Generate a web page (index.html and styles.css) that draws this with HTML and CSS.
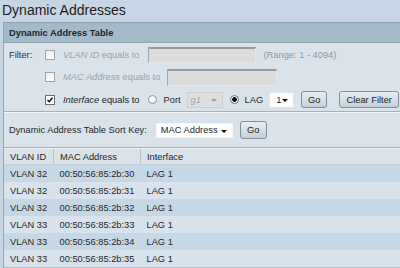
FILE: index.html
```html
<!DOCTYPE html>
<html lang="en">
<head>
<meta charset="utf-8">
<title>Dynamic Addresses</title>
<link rel="stylesheet" href="styles.css">
</head>
<body>
<h1 class="title">Dynamic Addresses</h1>
<div class="panel">
  <div class="panel-head">Dynamic Address Table</div>
  <div class="filter">
    <div class="frow r1">
      <span class="flabel">Filter:</span>
      <span class="cb"></span>
      <span class="lbl dis"><i>VLAN ID</i> equals to</span>
      <span class="tinput vlan"></span>
      <span class="hint">(Range: 1 - 4094)</span>
    </div>
    <div class="frow r2">
      <span class="cb"></span>
      <span class="lbl dis"><i>MAC Address</i> equals to</span>
      <span class="tinput mac"></span>
    </div>
    <div class="frow r3">
      <span class="cb checked"><svg viewBox="0 0 8 8" width="8" height="8"><path d="M1.5 4 L3.2 5.8 L6.5 1.8" fill="none" stroke="#111" stroke-width="1.4"/></svg></span>
      <span class="lbl"><i>Interface</i> equals to</span>
      <span class="radio rport"></span>
      <span class="txt port">Port</span>
      <span class="sel dsel port-sel"><span class="sv">g1</span><span class="arr"></span></span>
      <span class="radio on rlag"></span>
      <span class="txt lag">LAG</span>
      <span class="sel lag-sel"><span class="sv">1</span><span class="arr"></span></span>
      <span class="btn go1">Go</span>
      <span class="btn clear">Clear Filter</span>
    </div>
  </div>
  <div class="sortrow">
    <span class="txt">Dynamic Address Table Sort Key:</span>
    <span class="sel sort-sel"><span class="sv">MAC Address</span><span class="arr"></span></span>
    <span class="btn go2">Go</span>
  </div>
  <table class="grid">
    <thead>
      <tr><th class="c1">VLAN ID</th><th class="c2">MAC Address</th><th class="c3">Interface</th></tr>
    </thead>
    <tbody>
      <tr><td>VLAN 32</td><td>00:50:56:85:2b:30</td><td>LAG 1</td></tr>
      <tr><td>VLAN 32</td><td>00:50:56:85:2b:31</td><td>LAG 1</td></tr>
      <tr><td>VLAN 32</td><td>00:50:56:85:2b:32</td><td>LAG 1</td></tr>
      <tr><td>VLAN 33</td><td>00:50:56:85:2b:33</td><td>LAG 1</td></tr>
      <tr><td>VLAN 33</td><td>00:50:56:85:2b:34</td><td>LAG 1</td></tr>
      <tr><td>VLAN 33</td><td>00:50:56:85:2b:35</td><td>LAG 1</td></tr>
    </tbody>
  </table>
</div>
</body>
</html>
```

FILE: styles.css
```css
html, body {
  margin: 0;
  padding: 0;
}
body {
  background: #c6d6e4;
  font-family: "Liberation Sans", Arial, sans-serif;
  font-size: 9.3px;
  color: #2a2a2a;
  width: 400px;
  height: 268px;
  overflow: hidden;
}
.title {
  margin: 0;
  height: 22px;
  line-height: 21px;
  padding-left: 2px;
  font-size: 14px;
  font-weight: normal;
  color: #1c1c1c;
}
.panel {
  margin-left: 3px;
  border-left: 1px solid #93a6b4;
  border-top: 1px solid #8ea4b4;
  background: #dae2ea;
}
.panel-head {
  height: 19px;
  line-height: 20px;
  background: #a4bac9;
  border-bottom: 1px solid #90a6b5;
  padding-left: 5px;
  font-weight: bold;
  font-size: 9.3px;
  color: #1b2731;
}
.filter {
  padding-top: 1px;
  border-bottom: 1px solid #a3b0ba;
  box-shadow: 0 1px 0 #f2f5f8;
}
.frow {
  display: flex;
  align-items: center;
  height: 22px;
  padding-left: 41px;
}
.frow.r1 {
  padding-left: 5px;
}
.frow.r3 {
  height: 23px;
}
.flabel {
  width: 36px;
  color: #333;
}
.cb {
  box-sizing: border-box;
  width: 10px;
  height: 10px;
  border: 1px solid #a4a4a4;
  background: linear-gradient(#f0f0f0, #ffffff);
  display: flex;
  align-items: center;
  justify-content: center;
  flex: none;
}
.cb.checked {
  border-color: #6f6f6f;
  background: #fff;
}
.lbl {
  margin-left: 8px;
  white-space: nowrap;
  color: #262626;
}
.lbl.dis {
  color: #9aa3ab;
}
.tinput {
  box-sizing: border-box;
  background: #dcdcdc;
  border-top: 2px solid #9a9a9a;
  border-left: 1px solid #a8a8a8;
  border-right: 1px solid #e6e6e6;
  border-bottom: 1px solid #e6e6e6;
  margin-left: 8px;
  flex: none;
}
.tinput.vlan {
  width: 108px;
  height: 16px;
}
.tinput.mac {
  width: 110px;
  height: 17px;
  margin-left: 7px;
}
.hint {
  margin-left: 8px;
  color: #8d99a3;
  white-space: nowrap;
}
.radio {
  box-sizing: border-box;
  width: 9px;
  height: 9px;
  border-radius: 50%;
  border: 1px solid #9a9a9a;
  background: radial-gradient(circle at 50% 40%, #ffffff 30%, #dedede 100%);
  margin-left: 8px;
  flex: none;
}
.radio.on {
  border-color: #7a7a7a;
  background: radial-gradient(circle, #000 0 2px, #f4f4f4 2.6px, #d8d8d8 100%);
  margin-left: 7px;
}
.txt {
  white-space: nowrap;
  color: #262626;
}
.txt.port {
  margin-left: 7px;
}
.txt.lag {
  margin-left: 6px;
}
.sel {
  box-sizing: border-box;
  display: flex;
  align-items: center;
  height: 16px;
  background: #fff;
  border: 1px solid #e2e6ea;
  padding-left: 3px;
  position: relative;
  flex: none;
  color: #1e1e1e;
}
.sel .arr {
  position: absolute;
  right: 5px;
  top: 6px;
  width: 0;
  height: 0;
  border-left: 3px solid transparent;
  border-right: 3px solid transparent;
  border-top: 3px solid #111;
}
.sel.dsel {
  background: #dedede;
  border-color: #cfcfcf;
  color: #a6a6a6;
  font-style: italic;
}
.sel.dsel .arr {
  border-top-color: #a0a0a0;
}
.port-sel {
  width: 36px;
  margin-left: 6px;
}
.lag-sel {
  width: 25px;
  margin-left: 6px;
  padding-left: 6px;
}
.btn {
  box-sizing: border-box;
  display: flex;
  align-items: center;
  justify-content: center;
  height: 17px;
  border: 1px solid #7f8f9b;
  border-radius: 3px;
  background: linear-gradient(#e9eff3, #c3cfd9);
  color: #222;
  white-space: nowrap;
  flex: none;
}
.go1 {
  width: 26px;
  margin-left: 7px;
}
.clear {
  width: 60px;
  margin-left: 12px;
}
.sortrow {
  display: flex;
  align-items: center;
  height: 34px;
  padding-left: 5px;
  border-bottom: 1px solid #a3b0ba;
  box-shadow: 0 1px 0 #f2f5f8;
  margin-top: 1px;
}
.sort-sel {
  width: 77px;
  height: 15px;
  margin-left: 9px;
  padding-left: 4px;
  border-color: #f4f6f8;
}
.go2 {
  width: 27px;
  height: 18px;
  margin-left: 7px;
}
.grid {
  border-collapse: collapse;
  width: 396px;
  margin-top: 1px;
  border-bottom: 1px solid #b3bfc9;
}
.grid th {
  height: 15px;
  padding: 0 0 0 6px;
  text-align: left;
  font-weight: normal;
  color: #262626;
  background: #dae2ea;
  border-bottom: 1px solid #c3ced7;
}
.grid th.c1 {
  width: 43px;
  border-right: 1px solid #b5c1cb;
}
.grid th.c2 {
  width: 80px;
  border-right: 1px solid #b5c1cb;
}
.grid td {
  height: 17px;
  padding: 0 0 0 6px;
  color: #262626;
}
.grid tbody tr:nth-child(odd) {
  background: #c6d7e6;
}
.grid tbody tr:nth-child(even) {
  background: #d7e2ec;
}
```
